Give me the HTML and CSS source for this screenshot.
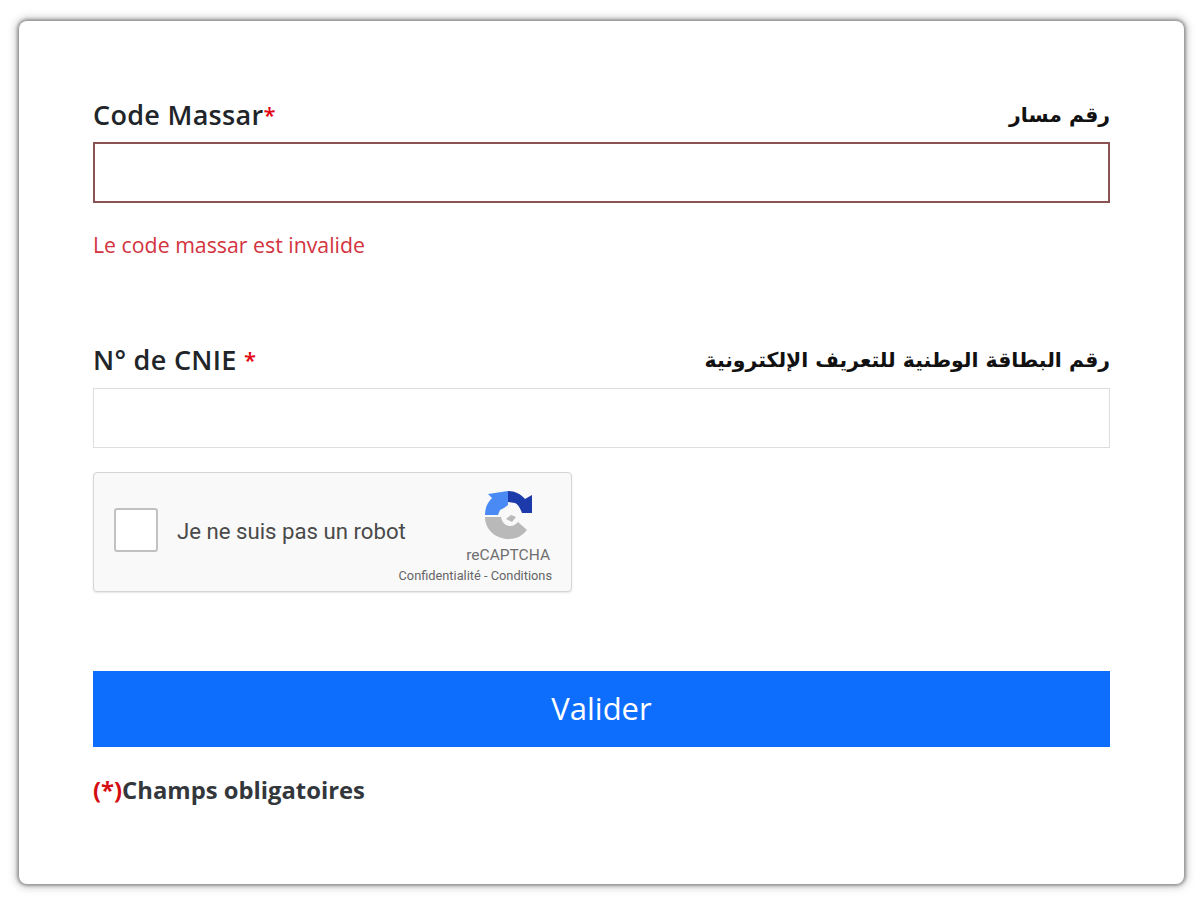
FILE: index.html
```html
<!DOCTYPE html>
<html lang="fr">
<head>
  <meta charset="UTF-8" />
  <title>Code Massar</title>
  <link rel="stylesheet" href="styles.css">
</head>
<body>
  <form class="card">
    <div class="label-row label-row-first">
      <label class="label">Code Massar<span class="req">*</span></label>
      <span class="label-ar" dir="rtl" lang="ar">رقم مسار</span>
    </div>
    <input class="field field-invalid" type="text">
    <div class="error">Le code massar est invalide</div>

    <div class="label-row label-row-second">
      <label class="label">N° de CNIE <span class="req">*</span></label>
      <span class="label-ar" dir="rtl" lang="ar">رقم البطاقة الوطنية للتعريف الإلكترونية</span>
    </div>
    <input class="field field-plain" type="text">

    <div class="captcha">
      <div class="captcha-box"></div>
      <div class="captcha-text">Je ne suis pas un robot</div>
      <div class="captcha-brand">
        <svg class="captcha-logo" viewBox="0 0 50 52" width="50" height="52">
          <path fill="#b9b9b9" d="M1 28H17C18 33 21 37 26 37C30 37 32 35 34 33L43 41C39 46 33 50 25 50C11 50 1 40 1 28Z"/>
          <path fill="#b9b9b9" d="M22 30L27 26L32 28L28 33Z"/>
          <path fill="#4a8af4" d="M1 26C1 18 4 13 8 9L4 5L24 2V16L20 19L16 21L14 26Z"/>
          <path fill="#1c3aa9" d="M24 2C31 2 37 5 41 10L48 6V24H38C36 19 34 15 31 14L24 13Z"/>
        </svg>
        <div class="captcha-name">reCAPTCHA</div>
        <div class="captcha-links">Confidentialité - Conditions</div>
      </div>
    </div>

    <button class="submit" type="button">Valider</button>
    <div class="note"><span class="req">(*)</span>Champs obligatoires</div>
  </form>
</body>
</html>
```

FILE: styles.css
```css
html, body { margin:0; background:#fff; }
body { padding:21px 16px 21px 19px; font-family:"Open Sans", "Lato", sans-serif; color:#212529; }
* { box-sizing:border-box; }

.card {
  height:863px; padding:0 74px; background:#fff; border-radius:8px;
  box-shadow:0 0 3px 2px rgba(0,0,0,0.3), 0 0 9px 3px rgba(0,0,0,0.22);
}

.label-row { display:flex; justify-content:space-between; align-items:center; height:32px; margin-bottom:11px; }
.label-row-first { padding-top:78px; height:auto; margin-bottom:11px; }
.label-row-second { margin-top:86px; margin-bottom:12px; }
.label { font-size:27px; font-weight:600; letter-spacing:0.3px; line-height:32px; }
.label .req { font-size:22px; line-height:0; vertical-align:2px; }
.label-ar { font-family:"DejaVu Sans", sans-serif; font-size:20.4px; font-weight:700; line-height:32px; color:#111; }
.req { color:#e30613; }

.field { display:block; width:100%; background:#fff; outline:none; border-radius:0; }
.field-invalid { height:61px; border:2px solid #8b5252; }
.field-plain { height:60px; border:1px solid #dcdfe2; }

.error { margin-top:29px; height:26px; line-height:26px; font-size:21.3px; color:#d3343f; }

.captcha {
  position:relative; display:flex; align-items:center;
  width:479px; height:120px; margin-top:24px; padding:0 0 4px 20px;
  background:#f9f9f9; border:1px solid #d6d6d6; border-radius:4px;
  box-shadow:0 1px 2px rgba(0,0,0,0.1);
  font-family:"Roboto", sans-serif;
}
.captcha-box { width:44px; height:44px; background:#fff; border:2px solid #c1c1c1; border-radius:3px; }
.captcha-text { margin-left:19px; padding-top:2px; font-size:22.2px; color:#4a4a4a; }
.captcha-brand { position:absolute; right:19px; top:16px; display:flex; flex-direction:column; align-items:flex-end; }
.captcha-logo { display:block; margin-right:18px; }
.captcha-name { margin-top:4px; margin-right:2px; font-size:15.5px; line-height:20px; color:#6f6f6f; }
.captcha-links { margin-top:3px; font-size:12.8px; line-height:16px; color:#666; white-space:nowrap; }

.submit {
  display:block; width:100%; height:76px; margin-top:79px; padding:0 0 3px;
  background:#0d6efd; color:#fff; border:none; border-radius:0;
  font-family:inherit; font-size:31px;
}

.note { margin-top:27px; font-size:23.8px; font-weight:700; line-height:32px; color:#33373b; }
.note .req { color:#d40d12; }
```
